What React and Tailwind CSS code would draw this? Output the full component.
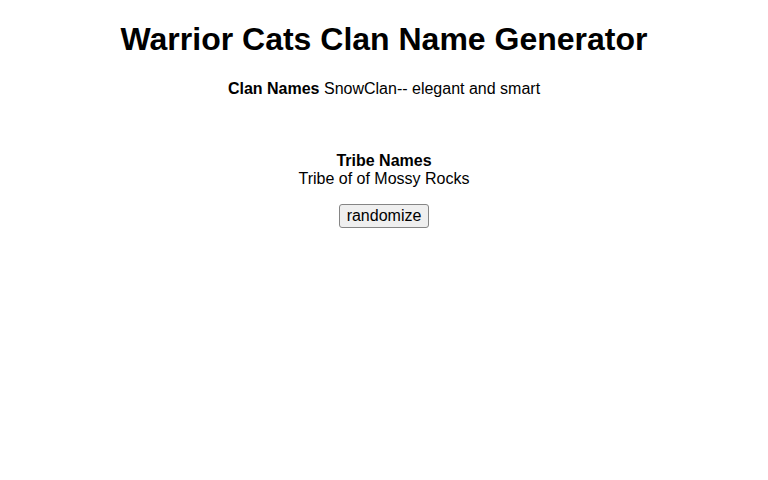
export default function App() {
  return (
    <div className="min-h-screen bg-white text-black text-center font-['Liberation_Sans',Arial,sans-serif]">
      <h1 className="pt-[21px] text-[32px] leading-[37px] font-bold">Warrior Cats Clan Name Generator</h1>
      <p className="mt-[22px] text-base leading-[18px]">
        <b>Clan Names</b> SnowClan-- elegant and smart
      </p>
      <div className="mt-[54px] text-base leading-[18px]">
        <p className="font-bold">Tribe Names</p>
        <p>Tribe of of Mossy Rocks</p>
      </div>
      <div className="mt-[16px]">
        <button className="h-[24px] px-[7px] border border-[#858585] rounded-[3px] bg-[#efefef] text-base leading-[18px] text-black">
          randomize
        </button>
      </div>
    </div>
  );
}
